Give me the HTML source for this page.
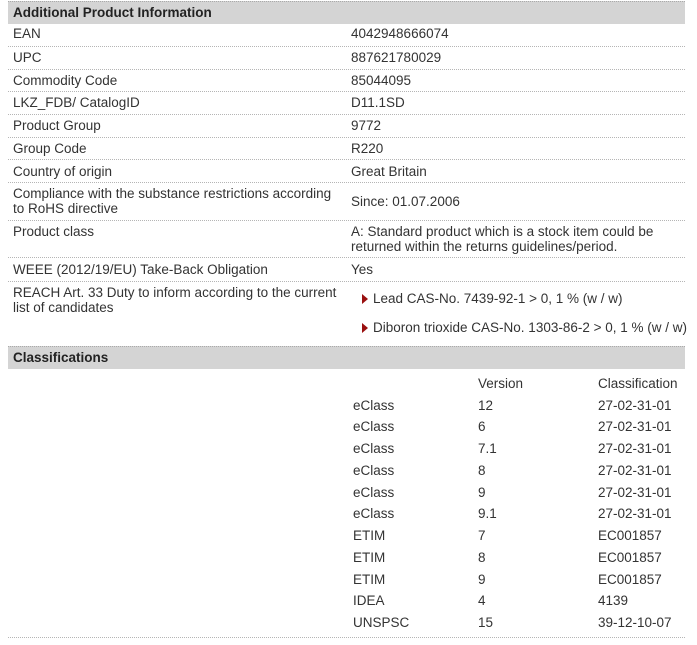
<!DOCTYPE html>
<html><head><meta charset="utf-8"><style>
*{margin:0;padding:0;box-sizing:border-box}
body{width:697px;height:645px;background:#fff;font-family:"Liberation Sans",Arial,sans-serif;font-size:13.5px;color:#333;position:relative;overflow:hidden}
.t{position:absolute;line-height:15px;white-space:nowrap}
.hd{position:absolute;left:8px;width:677px;height:23px;background:#d4d4d4;border-top:1px dotted #aaa;font-weight:bold;padding-left:5px;line-height:21px;color:#222}
.ln{position:absolute;left:8px;width:677px;border-top:1px dotted #b5b5b5;height:0}
.tri{display:inline-block;width:0;height:0;border-top:5px solid transparent;border-bottom:5px solid transparent;border-left:6px solid #9a1010;margin-right:5px;vertical-align:-1px}
</style></head><body>
<div class="hd" style="top:1px">Additional Product Information</div>
<div class="t" style="left:13px;top:26px">EAN</div><div class="t" style="left:351px;top:26px">4042948666074</div>
<div class="ln" style="top:46px"></div>
<div class="t" style="left:13px;top:50px">UPC</div><div class="t" style="left:351px;top:50px">887621780029</div>
<div class="ln" style="top:69px"></div>
<div class="t" style="left:13px;top:73px">Commodity Code</div><div class="t" style="left:351px;top:73px">85044095</div>
<div class="ln" style="top:91px"></div>
<div class="t" style="left:13px;top:95px">LKZ_FDB/ CatalogID</div><div class="t" style="left:351px;top:95px">D11.1SD</div>
<div class="ln" style="top:114px"></div>
<div class="t" style="left:13px;top:118px">Product Group</div><div class="t" style="left:351px;top:118px">9772</div>
<div class="ln" style="top:137px"></div>
<div class="t" style="left:13px;top:141px">Group Code</div><div class="t" style="left:351px;top:141px">R220</div>
<div class="ln" style="top:159px"></div>
<div class="t" style="left:13px;top:164px">Country of origin</div><div class="t" style="left:351px;top:164px">Great Britain</div>
<div class="ln" style="top:182px"></div>
<div class="t" style="left:13px;top:186px">Compliance with the substance restrictions according<br>to RoHS directive</div><div class="t" style="left:351px;top:194px">Since: 01.07.2006</div>
<div class="ln" style="top:220px"></div>
<div class="t" style="left:13px;top:224px">Product class</div><div class="t" style="left:351px;top:224px">A: Standard product which is a stock item could be<br>returned within the returns guidelines/period.</div>
<div class="ln" style="top:257px"></div>
<div class="t" style="left:13px;top:262px">WEEE (2012/19/EU) Take-Back Obligation</div><div class="t" style="left:351px;top:262px">Yes</div>
<div class="ln" style="top:281px"></div>
<div class="t" style="left:13px;top:285px">REACH Art. 33 Duty to inform according to the current<br>list of candidates</div>
<div class="t" style="left:362px;top:291px"><span class="tri"></span>Lead CAS-No. 7439-92-1 &gt; 0, 1 % (w / w)</div>
<div class="t" style="left:362px;top:320px"><span class="tri"></span>Diboron trioxide CAS-No. 1303-86-2 &gt; 0, 1 % (w / w)</div>
<div class="hd" style="top:346px">Classifications</div>
<div class="t" style="left:478px;top:376px">Version</div><div class="t" style="left:598px;top:376px">Classification</div>
<div class="t" style="left:353px;top:398px">eClass</div><div class="t" style="left:478px;top:398px">12</div><div class="t" style="left:598px;top:398px">27-02-31-01</div>
<div class="t" style="left:353px;top:419px">eClass</div><div class="t" style="left:478px;top:419px">6</div><div class="t" style="left:598px;top:419px">27-02-31-01</div>
<div class="t" style="left:353px;top:441px">eClass</div><div class="t" style="left:478px;top:441px">7.1</div><div class="t" style="left:598px;top:441px">27-02-31-01</div>
<div class="t" style="left:353px;top:463px">eClass</div><div class="t" style="left:478px;top:463px">8</div><div class="t" style="left:598px;top:463px">27-02-31-01</div>
<div class="t" style="left:353px;top:485px">eClass</div><div class="t" style="left:478px;top:485px">9</div><div class="t" style="left:598px;top:485px">27-02-31-01</div>
<div class="t" style="left:353px;top:506px">eClass</div><div class="t" style="left:478px;top:506px">9.1</div><div class="t" style="left:598px;top:506px">27-02-31-01</div>
<div class="t" style="left:353px;top:528px">ETIM</div><div class="t" style="left:478px;top:528px">7</div><div class="t" style="left:598px;top:528px">EC001857</div>
<div class="t" style="left:353px;top:550px">ETIM</div><div class="t" style="left:478px;top:550px">8</div><div class="t" style="left:598px;top:550px">EC001857</div>
<div class="t" style="left:353px;top:572px">ETIM</div><div class="t" style="left:478px;top:572px">9</div><div class="t" style="left:598px;top:572px">EC001857</div>
<div class="t" style="left:353px;top:593px">IDEA</div><div class="t" style="left:478px;top:593px">4</div><div class="t" style="left:598px;top:593px">4139</div>
<div class="t" style="left:353px;top:615px">UNSPSC</div><div class="t" style="left:478px;top:615px">15</div><div class="t" style="left:598px;top:615px">39-12-10-07</div>
<div class="ln" style="top:637px"></div>
</body></html>
